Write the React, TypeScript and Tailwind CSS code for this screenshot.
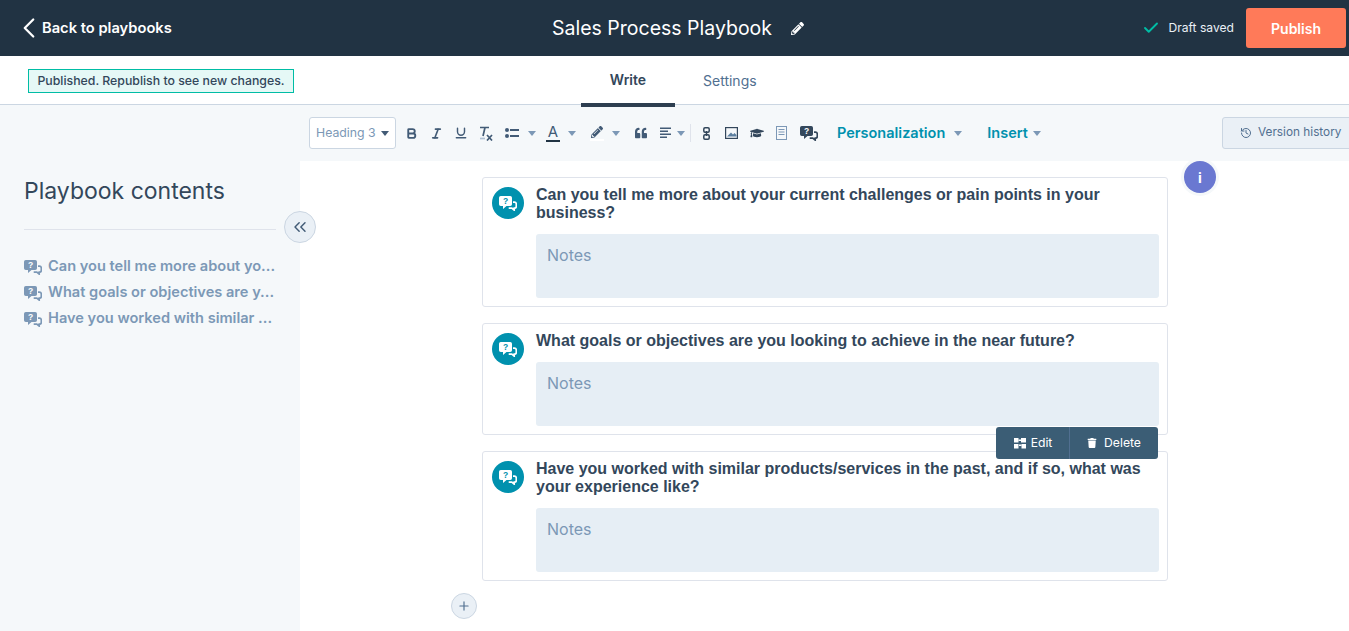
import { ChevronLeft, ChevronsLeft, Check, Plus, History, Bold, Italic, Underline } from "lucide-react";
import { FaPencilAlt, FaTrash, FaQuoteLeft, FaGraduationCap } from "react-icons/fa";

const font = "font-['Inter','Noto_Sans',sans-serif]";

const questions = [
  { text: "Can you tell me more about your current challenges or pain points in your business?", short: "Can you tell me more about yo...", h: "h-[130px]" },
  { text: "What goals or objectives are you looking to achieve in the near future?", short: "What goals or objectives are y...", h: "h-[112px]" },
  { text: "Have you worked with similar products/services in the past, and if so, what was your experience like?", short: "Have you worked with similar ...", h: "h-[130px]" },
];

const Caret = ({ className = "border-t-[#7c98b6] ml-[9px]" }: { className?: string }) => (
  <span className={`block w-0 h-0 border-x-[4px] border-x-transparent border-t-[5px] shrink-0 ${className}`} />
);

const Chat = ({ className = "", color = "#5c7f9f", mark = "#fff" }: { className?: string; color?: string; mark?: string }) => (
  <svg viewBox="0 0 18 15" className={className}>
    <path d="M1.800 0h9.400A1.800 1.800 0 0 1 13 1.800v6.400A1.800 1.800 0 0 1 11.200 10H7.500L4 13V10H1.800A1.800 1.800 0 0 1 0 8.200V1.800A1.800 1.800 0 0 1 1.800 0z" fill={color} />
    <path d="M14 6.200h1.500c1 0 1.800.8 1.800 1.800v2.300c0 1-.8 1.800-1.800 1.800h-.3v2l-2.400-2H9.700" fill="none" stroke={color} strokeWidth="1.700" />
    <text x="6.500" y="7.900" textAnchor="middle" fontSize="8.500" fontWeight="700" fontFamily="Liberation Sans" fill={mark}>?</text>
  </svg>
);

function Question({ text, h }: { text: string; h: string }) {
  return (
    <div className={`${h} border border-[#dfe3eb] rounded-[3px] bg-white flex gap-3 pl-[9px] pr-2 pt-[9px]`}>
      <div className="w-8 h-8 rounded-full bg-[#0091ae] flex items-center justify-center shrink-0">
        <Chat className="w-[18px] h-[15px]" color="#ffffff" mark="#0091ae" />
      </div>
      <div className="flex-1 min-w-0 -mt-px">
        <p className="font-['Liberation_Sans',sans-serif] font-bold text-[16px] leading-[18px] text-[#33475b] pr-1">{text}</p>
        <div className="mt-[12px] h-16 bg-[#e6eef5] rounded-[3px] px-[11px] pt-[11px] text-[16px] leading-5 text-[#7c98b6]">Notes</div>
      </div>
    </div>
  );
}

export default function App() {
  return (
    <div className={`${font} w-[1349px] h-[631px] overflow-hidden bg-white flex flex-col text-[#33475b]`}>
      {/* top bar */}
      <header className="h-14 shrink-0 bg-[#213343] flex items-center pl-3 pr-[3px] text-white">
        <div className="flex items-center w-[540px]">
          <ChevronLeft size={34} strokeWidth={1.6} className="shrink-0" />
          <span className="-ml-1 mt-px text-[14.7px] font-semibold">Back to playbooks</span>
        </div>
        <span className="mt-[2px] text-[19.500px]">Sales Process Playbook</span>
        <FaPencilAlt size={13} className="ml-[19px]" />
        <div className="ml-auto flex items-center gap-3">
          <div className="flex items-center gap-2">
            <Check size={18} strokeWidth={2.5} className="text-[#00bda5]" />
            <span className="text-[12.100px] text-[#eaf0f6]">Draft saved</span>
          </div>
          <button className="w-[100px] h-10 bg-[#ff7a59] rounded-[3px] text-[14px] font-semibold">Publish</button>
        </div>
      </header>

      {/* tabs */}
      <div className="h-[49px] shrink-0 flex items-center relative border-b border-[#cbd6e2] bg-white">
        <div className="ml-7 mt-[2px] border border-[#00bda5] bg-[#e5f8f6] h-6 w-[266px] flex items-center justify-center text-[12.300px] font-medium text-[#33475b] whitespace-nowrap">
          Published. Republish to see new changes.
        </div>
        <div className="absolute left-[581px] top-0 h-[51px] w-[94px] border-b-4 border-[#2d3e50] flex items-center justify-center text-[14px] font-semibold">Write</div>
        <div className="absolute left-[703px] top-0 h-[49px] flex items-center text-[14px] text-[#516f90]">Settings</div>
      </div>

      {/* toolbar */}
      <div className="h-14 shrink-0 bg-[#f5f8fa] flex items-center pl-[309px] text-[#425b76]">
        <div className="w-[87px] h-8 bg-white border border-[#cbd6e2] rounded-[3px] flex items-center justify-between pl-[6px] pr-[6px] text-[12.300px] text-[#7c98b6] whitespace-nowrap">
          Heading 3 <Caret className="border-t-[#425b76]" />
        </div>
        <Bold size={13} strokeWidth={3.5} className="ml-[9px] shrink-0" />
        <Italic size={13} strokeWidth={3} className="ml-[12px] shrink-0" />
        <Underline size={14} strokeWidth={2.5} className="ml-[11px] shrink-0" />
        <svg viewBox="0 0 14 15" className="ml-[11px] w-[14px] h-[15px] shrink-0" fill="none" stroke="#425b76" strokeWidth="1.700">
          <path d="M1 1.500h9M6 1.500 4 10" />
          <path d="M1 12.500h5" stroke="#b0c1d4" />
          <path d="M8 9l5 5.500M13 9l-5 5.500" />
        </svg>
        <svg viewBox="0 0 14 10" className="ml-[12px] w-[14px] h-[10px] shrink-0" fill="#425b76">
          <circle cx="2" cy="2" r="2" /><circle cx="2" cy="8" r="2" />
          <rect x="5" y="1" width="9" height="2" /><rect x="5" y="7" width="9" height="2" />
        </svg>
        <Caret />
        <span className="ml-[10px] w-[14px] shrink-0 text-center text-[15px] leading-[16px] font-normal border-b-2 border-[#213343]">A</span>
        <Caret className="border-t-[#7c98b6] ml-[8px]" />
        <span className="ml-[14px] w-[14px] shrink-0 border-b-2 border-white pb-px flex justify-center"><FaPencilAlt size={12} /></span>
        <Caret className="border-t-[#7c98b6] ml-[8px]" />
        <FaQuoteLeft size={12} className="ml-[15px] shrink-0" />
        <svg viewBox="0 0 12 12" className="ml-[13px] w-3 h-3 shrink-0" fill="#425b76">
          <rect y="0.500" width="11" height="1.500" /><rect y="3.500" width="8" height="1.500" /><rect y="6.500" width="11" height="1.500" /><rect y="9.500" width="7" height="1.500" />
        </svg>
        <Caret className="border-t-[#7c98b6] ml-[5px]" />
        <span className="ml-[5px] w-px h-[18px] bg-[#dfe3eb] shrink-0" />
        <svg viewBox="0 0 7 13" className="ml-[12px] w-[7px] h-[13px] shrink-0" fill="none" stroke="#33475b" strokeWidth="1.500">
          <rect x=".8" y=".8" width="5.400" height="4.500" rx="1.200" /><rect x=".8" y="7.700" width="5.400" height="4.500" rx="1.200" /><path d="M3.500 4v5" />
        </svg>
        <svg viewBox="0 0 13 12" className="ml-[15px] w-[13px] h-3 shrink-0">
          <rect x=".6" y=".6" width="11.800" height="10.800" fill="none" stroke="#33475b" strokeWidth="1.200" />
          <path d="M2 9.500 6 5.500l2 2 1.500-1.500 2 2v1.500z" fill="#5c7f9f" />
        </svg>
        <FaGraduationCap size={14} className="ml-[12px] shrink-0 text-[#33475b]" />
        <svg viewBox="0 0 11 14" className="ml-[12px] w-[11px] h-[14px] shrink-0" fill="none" stroke="#7c98b6"><rect x=".5" y=".5" width="10" height="13" /><path d="M2.500 3.500h6M2.500 6h6M2.500 8.500h6" /></svg>
        <Chat className="ml-[13px] w-[18px] h-[15px] shrink-0" color="#33475b" />
        <span className="ml-[19px] text-[14.500px] font-semibold text-[#0091ae] whitespace-nowrap">Personalization</span>
        <Caret className="border-t-[#7c98b6] ml-[9px]" />
        <span className="ml-[25px] text-[14.500px] font-semibold text-[#0091ae]">Insert</span>
        <Caret className="border-t-[#7c98b6] ml-[5px]" />
        <div className="ml-auto -mr-px w-[128px] h-8 bg-[#eaf0f6] border border-[#cbd6e2] rounded-l-[3px] flex items-center gap-[6px] pl-[17px] text-[11.800px] text-[#516f90] whitespace-nowrap">
          <History size={12} /> Version history
        </div>
      </div>

      {/* body */}
      <div className="flex-1 flex min-h-0">
        <aside className="w-[300px] shrink-0 bg-[#f5f8fa] relative pl-6 pr-6 pt-4">
          <h2 className="text-[23px] leading-7 text-[#33475b] font-normal whitespace-nowrap">Playbook contents</h2>
          <div className="mt-[24px] border-t border-[#dfe3eb]" />
          <ul className="mt-[27px] flex flex-col gap-[6px]">
            {questions.map((q) => (
              <li key={q.text} className="h-5 flex items-center gap-[6px] text-[14.600px] font-semibold text-[#7c98b6] whitespace-nowrap">
                <Chat className="w-[18px] h-[15px] shrink-0" color="#7c98b6" />
                <span>{q.short}</span>
              </li>
            ))}
          </ul>
          <button className="absolute left-[284px] top-[50px] w-8 h-8 rounded-full bg-[#eaf0f6] border border-[#cbd6e2] flex items-center justify-center text-[#425b76]">
            <ChevronsLeft size={20} strokeWidth={1.75} />
          </button>
        </aside>

        <main className="flex-1 relative pt-4 pl-[182px]">
          <div className="w-[686px] flex flex-col gap-4">
            {questions.map((q) => (
              <Question key={q.text} text={q.text} h={q.h} />
            ))}
          </div>
          {/* hover toolbar */}
          <div className="absolute left-[696px] top-[266px] w-[162px] h-8 bg-[#3b5d75] rounded-[3px] flex text-white text-[12.200px]">
            <div className="w-[74px] pl-px flex items-center justify-center gap-[5px] border-r border-[#516f90]">
              <svg viewBox="0 0 12 12" className="w-3 h-3" fill="#fff">
                <path d="M0 1h4.500v4.500H0zM7 1h5v4.500H7zM0 7h4.500v4.500H0zM7.500 7H12v4.500H7.500z" />
                <path d="M4.500 2.500h2.500v1.500H4.500zM5 7.500h2.500V9H5z" />
              </svg>
              Edit
            </div>
            <div className="flex-1 flex items-center justify-center gap-[7px]"><FaTrash size={10} /> Delete</div>
          </div>
          <div className="absolute left-[884px] top-0 w-8 h-8 rounded-full bg-[#6a78d1] ring-[3px] ring-[#f5f8fa] flex items-center justify-center text-white text-[14px] font-bold">i</div>
          <button className="absolute left-[151px] top-[432px] w-[26px] h-[26px] rounded-full bg-[#eaf0f6] border border-[#cbd6e2] flex items-center justify-center text-[#516f90]">
            <Plus size={14} />
          </button>
        </main>
      </div>
    </div>
  );
}
